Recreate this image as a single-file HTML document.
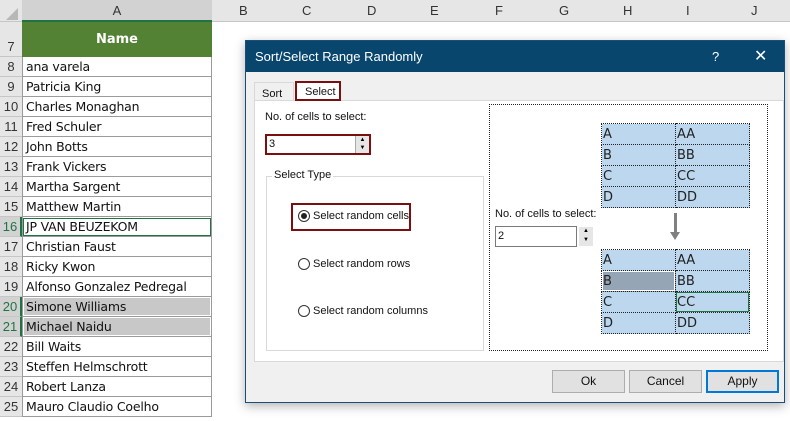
<!DOCTYPE html><html><head><style>
*{box-sizing:border-box;margin:0;padding:0}
body{width:790px;height:421px;overflow:hidden;background:#fff;font-family:"Liberation Sans",sans-serif;position:relative}
.a{position:absolute}
.hdr{top:0;height:22px;background:#e6e6e6;border-bottom:1px solid #c6c6c6;font-size:13px;color:#333;text-align:center;line-height:22px}
.rn{left:0;width:22px;height:20px;background:#e6e6e6;font-size:13px;color:#333;text-align:center;line-height:20px;border-bottom:1px solid #c6c6c6}
.cell{left:22px;width:190px;height:20px;border:1px solid #9b9b9b;border-top:none;line-height:19px;padding-left:3px;color:#111;font-family:"DejaVu Sans",sans-serif;font-size:12.5px;letter-spacing:-0.2px}
.dlg{left:245px;top:40px;width:540px;height:363px;background:#f0f0f0;border:1px solid #1a4e78;box-shadow:0 3px 10px rgba(0,0,0,.3)}
.t{font-family:"Liberation Sans",sans-serif;font-size:11px;color:#111}
.g td{border:1px dotted #222;background:#bdd7ee;font-family:"DejaVu Sans",sans-serif;font-size:13px;height:21px;padding-left:1px;color:#222}
.g{border-collapse:collapse;position:absolute}
.btn{top:370px;width:73px;height:23px;background:#e1e1e1;border:1px solid #adadad;text-align:center;line-height:21px;font-size:12px}
.rad{width:12px;height:12px;border:1px solid #333;border-radius:50%;background:#fff}
</style></head><body>
<div class="a hdr" style="left:0;width:22px"></div>
<div class="a" style="left:6px;top:8px;width:0;height:0;border-left:12px solid transparent;border-bottom:12px solid #b7b7b7"></div>
<div class="a hdr" style="left:22px;width:190px;background:#d2d2d2;border-bottom:2px solid #217346">A</div>
<div class="a hdr" style="left:212px;width:578px;text-align:left;background:#e6e6e6"></div>
<div class="a" style="top:0;left:212px;width:578px;height:22px;font-size:13px;line-height:22px;color:#333">
<span class="a" style="left:27px">B</span><span class="a" style="left:90px">C</span><span class="a" style="left:155px">D</span><span class="a" style="left:218px">E</span><span class="a" style="left:283px">F</span><span class="a" style="left:347px">G</span><span class="a" style="left:411px">H</span><span class="a" style="left:474px">I</span><span class="a" style="left:539px">J</span></div>
<div class="a" style="left:0;top:22px;width:22px;height:35px;background:#e6e6e6;font-size:13px;color:#333;text-align:center;padding-top:17px;border-bottom:1px solid #c6c6c6">7</div>
<div class="a" style="left:22px;top:22px;width:190px;height:35px;background:#548235;color:#fff;font-weight:bold;font-size:13px;text-align:center;line-height:35px;font-family:'DejaVu Sans',sans-serif">Name</div>
<div id="rows"></div>
<script>
var n=["ana varela","Patricia King","Charles Monaghan","Fred Schuler","John Botts","Frank Vickers","Martha Sargent","Matthew Martin","JP VAN BEUZEKOM","Christian Faust","Ricky Kwon","Alfonso Gonzalez Pedregal","Simone Williams","Michael Naidu","Bill Waits","Steffen Helmschrott","Robert Lanza","Mauro Claudio Coelho"];
var h="";for(var i=0;i<n.length;i++){var y=57+i*20;var r=8+i;var sel=(r==20||r==21);var act=r==16;
h+='<div class="a rn" style="top:'+y+'px;'+((sel||act)?'background:#d2d2d2;color:#217346;border-right:2px solid #217346':'')+'">'+r+'</div>';
h+='<div class="a cell" style="top:'+y+'px;'+(sel?'background:#c8c8c8;box-shadow:inset 0 0 0 1px #fff':'')+(act?'outline:1px solid #217346;outline-offset:-2px':'')+'">'+n[i]+'</div>';}
document.getElementById("rows").innerHTML=h;
</script>
<div class="a dlg">
<div class="a" style="left:0;top:0;width:538px;height:31px;background:#08466e;color:#fff;font-size:13px;font-family:'Liberation Sans',sans-serif;line-height:31px;padding-left:9px">Sort/Select Range Randomly
<span class="a" style="left:466px;font-size:13px">?</span><span class="a" style="left:508px;font-size:16px">✕</span></div>
</div>
<div class="a t" style="left:254px;top:82px;width:40px;height:19px;border:1px solid #d9d9d9;border-bottom:none;padding:5px 0 0 7px;background:#f0f0f0">Sort</div>
<div class="a" style="left:254px;top:100px;width:530px;height:262px;background:#fff;border:1px solid #d9d9d9"></div>
<div class="a t" style="left:295px;top:81px;width:46px;height:20px;border:2px solid #7b0f0f;background:#fff;padding:3px 0 0 8px">Select</div>
<div class="a t" style="left:265px;top:111px">No. of cells to select:</div>
<div class="a" style="left:265px;top:134px;width:106px;height:21px;border:2px solid #7b0f0f;background:#fff"></div>
<div class="a t" style="left:269px;top:138px">3</div>
<div class="a" style="left:355px;top:136px;width:14px;height:17px;background:#e6e6e6;border-left:1px solid #aaa;font-size:6px;text-align:center;line-height:8px">▲<br>▼</div>
<div class="a" style="left:266px;top:176px;width:218px;height:175px;border:1px solid #d9d9d9"></div>
<div class="a t" style="left:272px;top:169px;background:#fff;padding:0 2px">Select Type</div>
<div class="a" style="left:291px;top:203px;width:120px;height:28px;border:2px solid #7b0f0f"></div>
<div class="a rad" style="left:298px;top:210px"><div style="margin:2px;width:6px;height:6px;border-radius:50%;background:#222"></div></div>
<div class="a t" style="left:313px;top:210px">Select random cells</div>
<div class="a rad" style="left:298px;top:258px"></div><div class="a t" style="left:313px;top:258px">Select random rows</div>
<div class="a rad" style="left:298px;top:305px"></div><div class="a t" style="left:313px;top:305px">Select random columns</div>
<div class="a" style="left:489px;top:104px;width:279px;height:247px;border:1px dotted #222"></div>
<table class="g" style="left:601px;top:123px;width:149px"><tr><td style="width:74px">A</td><td>AA</td></tr><tr><td>B</td><td>BB</td></tr><tr><td>C</td><td>CC</td></tr><tr><td>D</td><td>DD</td></tr></table>
<table class="g" style="left:601px;top:249px;width:149px"><tr><td style="width:74px">A</td><td>AA</td></tr><tr><td style="background:#95a5b5;box-shadow:inset 0 0 0 1px #fff">B</td><td>BB</td></tr><tr><td>C</td><td style="box-shadow:inset 0 0 0 1px #217346">CC</td></tr><tr><td>D</td><td>DD</td></tr></table>
<div class="a" style="left:674px;top:213px;width:3px;height:20px;background:#808080"></div>
<div class="a" style="left:670px;top:232px;width:0;height:0;border-left:5px solid transparent;border-right:5px solid transparent;border-top:8px solid #808080"></div>
<div class="a t" style="left:495px;top:208px">No. of cells to select:</div>
<div class="a" style="left:495px;top:226px;width:82px;height:21px;border:1px solid #7a7a7a;background:#fff"></div>
<div class="a t" style="left:498px;top:230px">2</div>
<div class="a" style="left:579px;top:227px;width:14px;height:19px;background:#e6e6e6;font-size:6px;text-align:center;line-height:9px">▲<br>▼</div>
<div class="a btn t" style="left:552px">Ok</div>
<div class="a btn t" style="left:629px">Cancel</div>
<div class="a btn t" style="left:706px;border:2px solid #0078d7;line-height:19px">Apply</div>
</body></html>
